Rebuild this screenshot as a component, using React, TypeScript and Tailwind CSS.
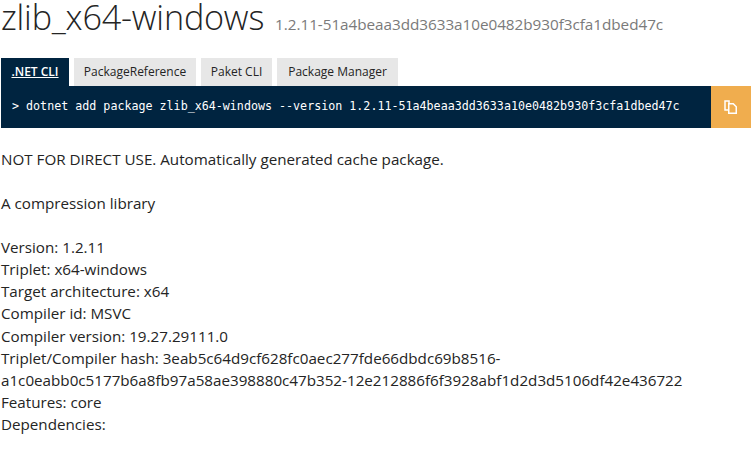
const tabs = ["PackageReference", "Paket CLI", "Package Manager"];

const details = [
  "Version: 1.2.11",
  "Triplet: x64-windows",
  "Target architecture: x64",
  "Compiler id: MSVC",
  "Compiler version: 19.27.29111.0",
  "Triplet/Compiler hash: 3eab5c64d9cf628fc0aec277fde66dbdc69b8516-",
  "a1c0eabb0c5177b6a8fb97a58ae398880c47b352-12e212886f6f3928abf1d2d3d5106df42e436722",
  "Features: core",
  "Dependencies:",
];

export default function App() {
  return (
    <div className="h-[456px] w-[755px] overflow-hidden bg-white pl-px font-['Open_Sans','Noto_Sans',sans-serif] text-[#242424]">
      <h1 className="flex h-[58px] items-baseline whitespace-nowrap">
        <span className="text-[34.2px] leading-[34px] font-light tracking-[-0.2px]">zlib_x64-windows</span>
        <span className="ml-[11px] text-[15.3px] font-normal tracking-[-0.05px] text-[#7a7a7a]">
          1.2.11-51a4beaa3dd3633a10e0482b930f3cfa1dbed47c
        </span>
      </h1>

      <div className="flex h-7 gap-[5px] text-[12px]">
        <div className="flex w-[68px] items-center justify-center bg-[#002440] font-semibold text-white underline">
          .NET CLI
        </div>
        {tabs.map((tab, i) => (
          <div
            key={tab}
            className={
              i === 0
                ? "flex w-[122px] items-center justify-center bg-[#e7e7e7]"
                : i === 1
                  ? "flex w-[71px] items-center justify-center bg-[#e7e7e7]"
                  : "flex w-[121px] items-center justify-center bg-[#e7e7e7]"
            }
          >
            {tab}
          </div>
        ))}
      </div>

      <div className="flex h-[42px] w-[750px]">
        <div className="flex flex-1 items-center bg-[#002440] pl-[11px] font-['DejaVu_Sans_Mono','Liberation_Mono',monospace] text-[11.68px] whitespace-pre text-white">
          {"> dotnet add package zlib_x64-windows --version 1.2.11-51a4beaa3dd3633a10e0482b930f3cfa1dbed47c"}
        </div>
        <div className="flex w-10 items-center justify-center bg-[#f0ad4e] text-white">
          <svg width="14" height="14" viewBox="0 0 14 14" fill="none" stroke="currentColor" strokeWidth="1.5">
            <path d="M5 3V1H1v9h3" />
            <path d="M4.75 3.75h4.5l3 3v6.5h-7.5z" />
          </svg>
        </div>
      </div>

      <div className="mt-[20px] text-[15.2px] leading-[22.1px] whitespace-nowrap">
        <p>NOT FOR DIRECT USE. Automatically generated cache package.</p>
        <p className="mt-[22px]">A compression library</p>
        <div className="mt-[22px]">
          {details.map((line) => (
            <p key={line}>{line}</p>
          ))}
        </div>
      </div>
    </div>
  );
}
